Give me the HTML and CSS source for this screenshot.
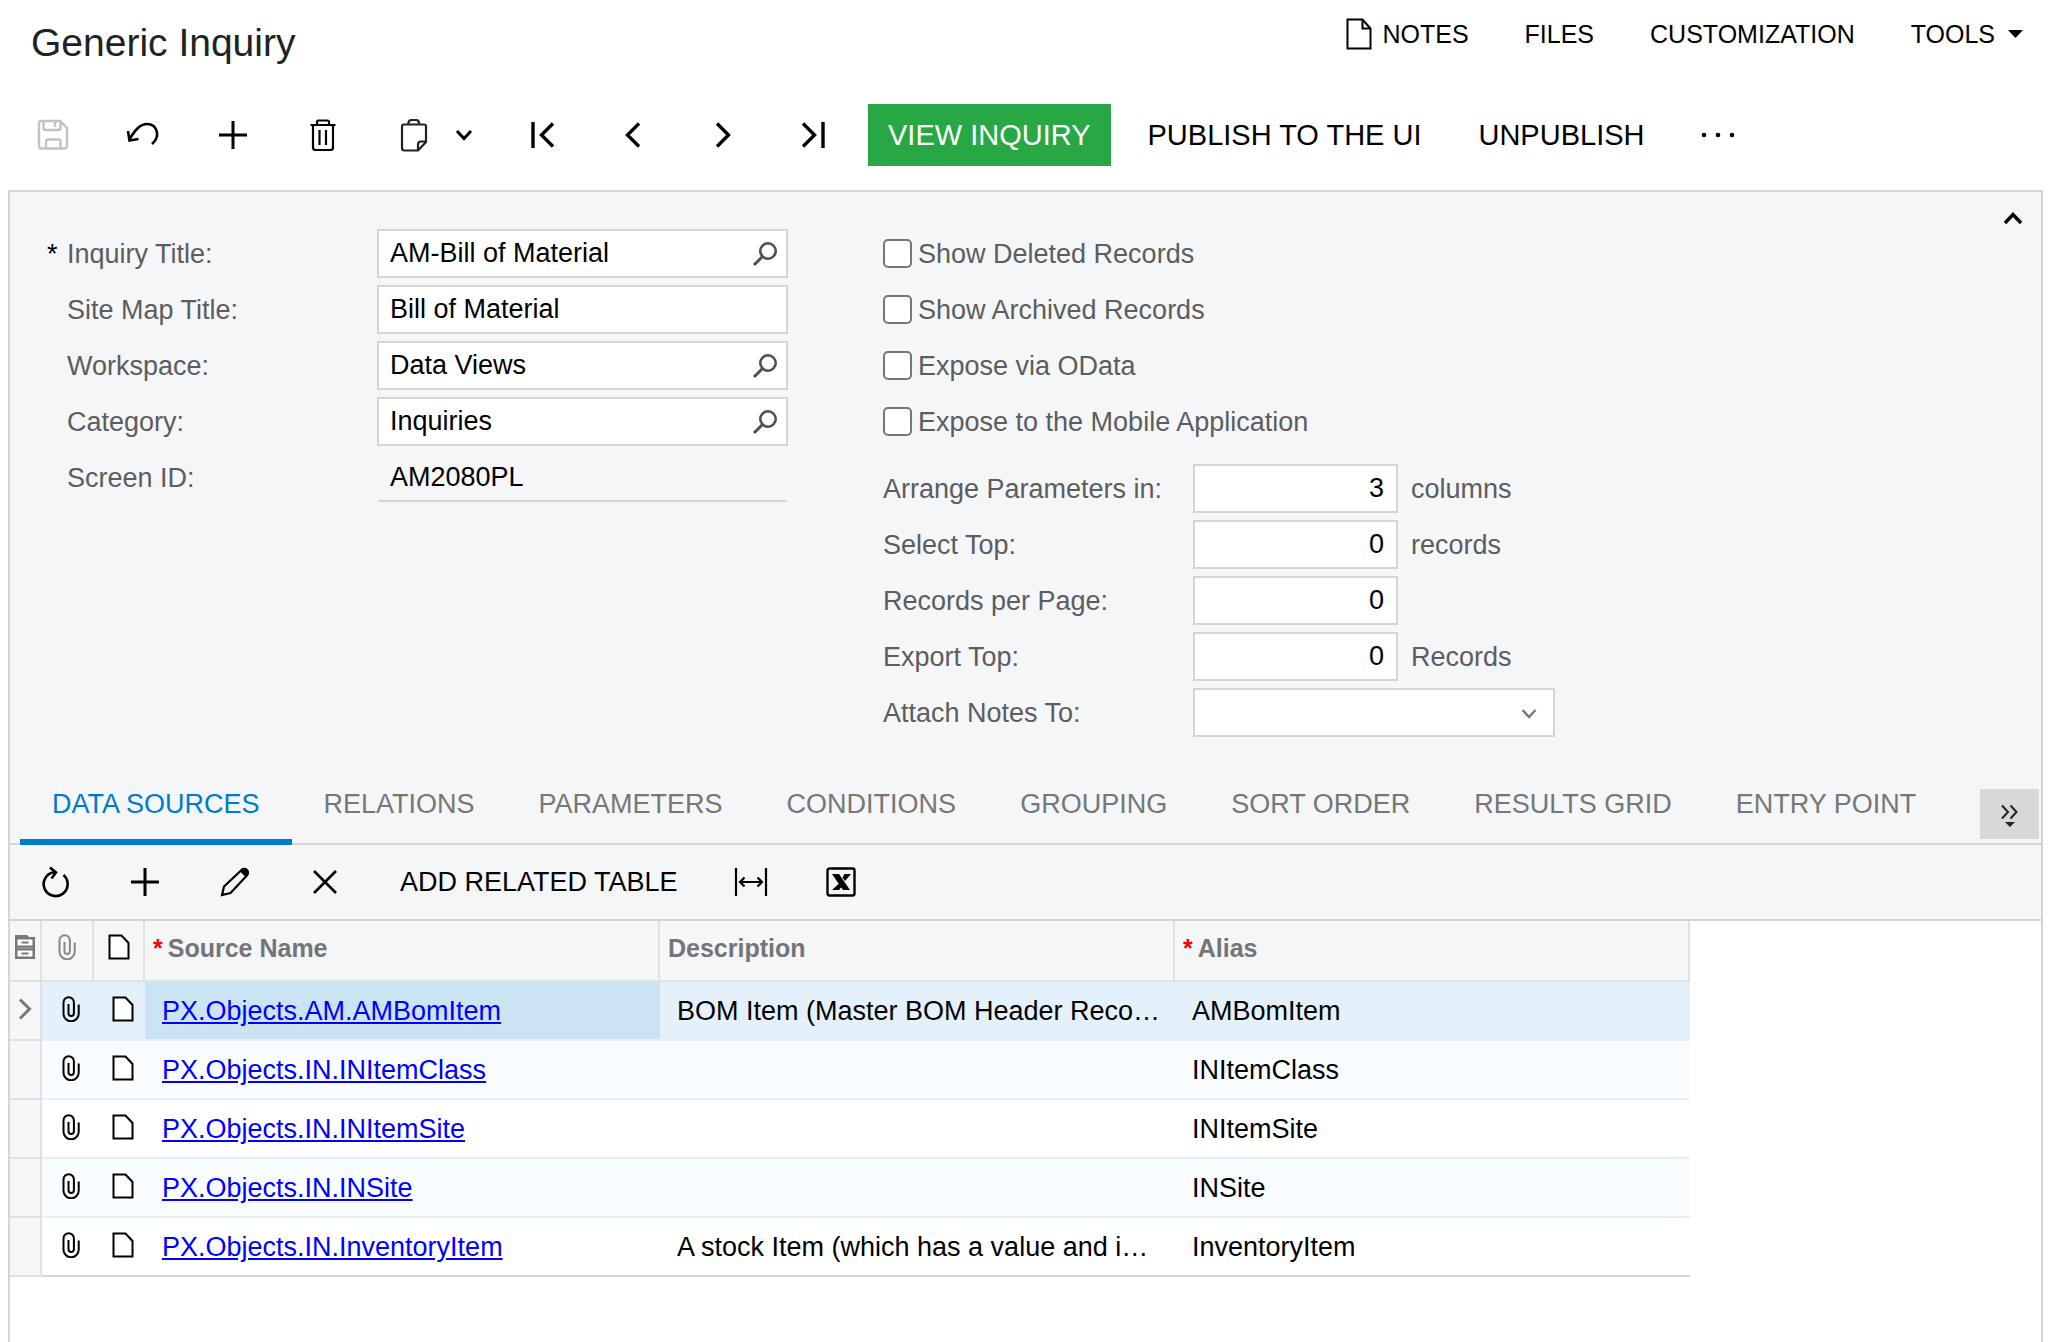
FILE: index.html
```html
<!DOCTYPE html>
<html lang="en">
<head>
<meta charset="UTF-8">
<meta name="viewport" content="width=device-width, initial-scale=1.0">
<title>Generic Inquiry</title>
<link rel="stylesheet" href="styles.css">
</head>
<body>
<svg class="symbols" width="0" height="0" aria-hidden="true">
<symbol id="i-plus" viewBox="0 0 32 32"><path d="M16 2v28M2 16h28" fill="none" stroke="currentColor" stroke-width="3"/></symbol>
<symbol id="i-search" viewBox="0 0 26 26"><circle cx="16" cy="10" r="7.7" fill="none" stroke="currentColor" stroke-width="2.6"/><path d="M10.5 15.5L2 24" fill="none" stroke="currentColor" stroke-width="3"/></symbol>
<symbol id="i-clip" viewBox="0 0 18 26"><path d="M16.7 8.5v9.2a7.6 7.600 0 0 1-15.200 0V6.500a5.200 5.200 0 0 1 10.400 0v10.700a2.700 2.700 0 0 1-5.400 0V8" fill="none" stroke="currentColor" stroke-width="2"/></symbol>
<symbol id="i-page" viewBox="0 0 22 26"><path d="M1.500 1.500h12l7 7.500v15.500h-19z" fill="#fff" stroke="currentColor" stroke-width="2"/></symbol>
</svg>

<header class="header">
<h1 class="title">Generic Inquiry</h1>
<nav class="menu">
<button class="menu-item"><svg class="menu-note" width="26" height="32" viewBox="0 0 26 32"><path d="M1.500 1.500h15l8 9v20h-23zM16.500 1.500v9h8" fill="none" stroke="#000" stroke-width="2"/></svg>NOTES</button>
<button class="menu-item">FILES</button>
<button class="menu-item">CUSTOMIZATION</button>
<button class="menu-item">TOOLS<svg class="menu-caret" width="16" height="8" viewBox="0 0 16 8"><path d="M0 0h15L7.500 8z"/></svg></button>
</nav>
</header>

<div class="toolbar">
<button class="icon-btn" aria-label="Save" disabled><svg width="32" height="32" viewBox="0 0 32 32"><path d="M4 2h19l7 7v18a2.500 2.500 0 0 1-2.500 2.500h-23A2.500 2.500 0 0 1 2 27V4a2 2 0 0 1 2-2zM6.500 2v7a2 2 0 0 0 2 2h13a2 2 0 0 0 2-2V2M18 3v5M9 29v-6.500a2 2 0 0 1 2-2h10.500a2 2 0 0 1 2 2V29" fill="none" stroke="currentColor" stroke-width="2.400"/></svg></button>
<button class="icon-btn" aria-label="Cancel"><svg width="34" height="32" viewBox="0 0 34 32"><path d="M3 21C9 11 14 5 21 5c10 0 14 12 5 20M2 12l1.500 9.500L12.500 20" fill="none" stroke="currentColor" stroke-width="2.600"/></svg></button>
<button class="icon-btn" aria-label="Add"><svg width="32" height="32"><use href="#i-plus"/></svg></button>
<button class="icon-btn" aria-label="Delete"><svg width="28" height="34" viewBox="0 0 28 34"><path d="M1.500 7h25M8 7V4a1.500 1.500 0 0 1 1.500-1.500h9A1.500 1.500 0 0 1 20 4v3M4 7v22.500A2.500 2.500 0 0 0 6.500 32h15a2.500 2.500 0 0 0 2.500-2.500V7M10.500 12v15M17 12v15" fill="none" stroke="currentColor" stroke-width="2.200"/></svg></button>
<div class="combo">
<button class="icon-btn combo-main" aria-label="Clipboard"><svg width="28" height="34" viewBox="0 0 28 34"><path d="M4 6.500h20a2 2 0 0 1 2 2V24l-8 8.500H4.500a2.500 2.500 0 0 1-2.500-2.500V8.500a2 2 0 0 1 2-2zM8.500 6V4.500a3 3 0 0 1 3-2.500h4.500a3 3 0 0 1 3 2.500V6M26 23.500h-5a3 3 0 0 0-3 3v6" fill="none" stroke="#222" stroke-width="2.200"/></svg></button>
<button class="icon-btn combo-arrow" aria-label="Clipboard menu"><svg width="18" height="12" viewBox="0 0 18 12"><path d="M2 2l7 7.500L16 2" fill="none" stroke="currentColor" stroke-width="3"/></svg></button>
</div>
<button class="icon-btn" aria-label="First"><svg width="24" height="28" viewBox="0 0 24 28"><path d="M2 1v26M22 2.500L10.500 14 22 25.500" fill="none" stroke="currentColor" stroke-width="3.400"/></svg></button>
<button class="icon-btn" aria-label="Previous"><svg width="16" height="28" viewBox="0 0 16 28"><path d="M14 2.500L2.500 14 14 25.500" fill="none" stroke="currentColor" stroke-width="3.400"/></svg></button>
<button class="icon-btn" aria-label="Next"><svg width="16" height="28" viewBox="0 0 16 28"><path d="M2 2.500L13.500 14 2 25.500" fill="none" stroke="currentColor" stroke-width="3.400"/></svg></button>
<button class="icon-btn" aria-label="Last"><svg width="24" height="28" viewBox="0 0 24 28"><path d="M22 1v26M2 2.500L13.500 14 2 25.500" fill="none" stroke="currentColor" stroke-width="3.400"/></svg></button>
<div class="actions">
<button class="action primary">VIEW INQUIRY</button>
<button class="action">PUBLISH TO THE UI</button>
<button class="action">UNPUBLISH</button>
<button class="action" aria-label="More"><svg width="34" height="6" viewBox="0 0 34 6"><circle cx="3" cy="3" r="2.300"/><circle cx="17" cy="3" r="2.300"/><circle cx="31" cy="3" r="2.300"/></svg></button>
</div>
</div>

<main class="panel">
<form class="form">
<div class="fields">
<div class="row"><label class="label required" for="inquiry-title">Inquiry Title:</label><div class="box"><input id="inquiry-title" type="text" value="AM-Bill of Material"><button type="button" class="lookup" aria-label="Select inquiry"><svg width="26" height="26"><use href="#i-search"/></svg></button></div></div>
<div class="row"><label class="label" for="sitemap-title">Site Map Title:</label><div class="box"><input id="sitemap-title" type="text" value="Bill of Material"></div></div>
<div class="row"><label class="label" for="workspace">Workspace:</label><div class="box"><input id="workspace" type="text" value="Data Views"><button type="button" class="lookup" aria-label="Select workspace"><svg width="26" height="26"><use href="#i-search"/></svg></button></div></div>
<div class="row"><label class="label" for="category">Category:</label><div class="box"><input id="category" type="text" value="Inquiries"><button type="button" class="lookup" aria-label="Select category"><svg width="26" height="26"><use href="#i-search"/></svg></button></div></div>
<div class="row"><label class="label" for="screen-id">Screen ID:</label><div class="box readonly"><input id="screen-id" type="text" value="AM2080PL" readonly></div></div>
</div>
<div class="options">
<div class="row"><input type="checkbox" class="check" id="show-deleted"><label for="show-deleted">Show Deleted Records</label></div>
<div class="row"><input type="checkbox" class="check" id="show-archived"><label for="show-archived">Show Archived Records</label></div>
<div class="row"><input type="checkbox" class="check" id="odata"><label for="odata">Expose via OData</label></div>
<div class="row"><input type="checkbox" class="check" id="mobile"><label for="mobile">Expose to the Mobile Application</label></div>
<div class="row params"><label class="label" for="columns">Arrange Parameters in:</label><div class="box num"><input id="columns" type="text" value="3"></div><span class="unit">columns</span></div>
<div class="row"><label class="label" for="select-top">Select Top:</label><div class="box num"><input id="select-top" type="text" value="0"></div><span class="unit">records</span></div>
<div class="row"><label class="label" for="per-page">Records per Page:</label><div class="box num"><input id="per-page" type="text" value="0"></div></div>
<div class="row"><label class="label" for="export-top">Export Top:</label><div class="box num"><input id="export-top" type="text" value="0"></div><span class="unit">Records</span></div>
<div class="row"><label class="label" for="attach">Attach Notes To:</label><div class="box drop"><select id="attach"><option></option></select><svg class="drop-arrow" width="16" height="12" viewBox="0 0 16 12"><path d="M1.500 2L8 9l6.500-7" fill="none" stroke="#777" stroke-width="2.400"/></svg></div></div>
</div>
<button type="button" class="collapse" aria-label="Collapse"><svg width="20" height="14" viewBox="0 0 20 14"><path d="M2 12l8-8.500L18 12" fill="none" stroke="#000" stroke-width="3.400"/></svg></button>
</form>

<div class="tabs">
<button class="tab active">DATA SOURCES</button>
<button class="tab">RELATIONS</button>
<button class="tab">PARAMETERS</button>
<button class="tab">CONDITIONS</button>
<button class="tab">GROUPING</button>
<button class="tab">SORT ORDER</button>
<button class="tab">RESULTS GRID</button>
<button class="tab">ENTRY POINT</button>
<button class="tabs-more" aria-label="More tabs"><svg width="20" height="24" viewBox="0 0 20 24"><path d="M2 1.500l6 6.500-6 6.500M10.500 1.500l6 6.500-6 6.500" fill="none" stroke="#222" stroke-width="2"/><path d="M5 18h10l-5 5z" fill="#222"/></svg></button>
</div>

<div class="grid-bar">
<button class="icon-btn" aria-label="Refresh"><svg width="30" height="32" viewBox="0 0 30 32"><path d="M23.500 9A12 12 0 1 1 14 6.200M10 1.500l6 5-4.500 6" fill="none" stroke="currentColor" stroke-width="2.600"/></svg></button>
<button class="icon-btn" aria-label="Add row"><svg width="32" height="32"><use href="#i-plus"/></svg></button>
<button class="icon-btn" aria-label="Edit"><svg width="30" height="30" viewBox="0 0 30 30"><path d="M2 28l2-8.500L21.500 3a3.800 3.800 0 0 1 5.400 5.400L10.500 26z" fill="none" stroke="currentColor" stroke-width="2.200"/><path d="M20 4.500L22.500 2c3-1.500 7 2 5.500 5.500L25.500 10z" fill="currentColor"/></svg></button>
<button class="icon-btn" aria-label="Delete row"><svg width="26" height="26" viewBox="0 0 26 26"><path d="M2 2l22 22M24 2L2 24" fill="none" stroke="currentColor" stroke-width="2.600"/></svg></button>
<button class="text-btn">ADD RELATED TABLE</button>
<button class="icon-btn" aria-label="Fit columns"><svg width="34" height="30" viewBox="0 0 34 30"><path d="M2 1v28M32 1v28M6 15h22M10.500 10.500L6 15l4.500 4.500M23.500 10.500L28 15l-4.500 4.500" fill="none" stroke="currentColor" stroke-width="2.200"/></svg></button>
<button class="icon-btn" aria-label="Export to Excel"><svg width="30" height="30" viewBox="0 0 30 30"><rect x="1.500" y="1.500" width="27" height="27" rx="2" fill="none" stroke="currentColor" stroke-width="2.400"/><path d="M6 7h7l11 16h-7zM18.500 7H25l-6 7-2.500-3.500zM13 16.500l2.500 3.500-2.500 3H6z" fill="currentColor"/></svg></button>
</div>

<div class="grid-wrap">
<table class="grid">
<colgroup><col class="c-mark"><col class="c-clip"><col class="c-page"><col class="c-data"><col class="c-data"><col class="c-data"></colgroup>
<thead>
<tr>
<th class="icon"><svg width="22" height="26" viewBox="0 0 22 26"><path d="M1 1h12l2 2h6v22H1z" fill="#777"/><path d="M3.500 5.500h15v6h-15zM3.500 16.500h15v6h-15z" fill="#fff"/><path d="M3 14h16" stroke="#aaa" stroke-width="1"/><path d="M7.500 8.500h7M7.500 19.500h7" stroke="#777" stroke-width="2"/></svg></th>
<th class="icon"><svg class="muted" width="18" height="26"><use href="#i-clip"/></svg></th>
<th class="icon"><svg width="22" height="26"><use href="#i-page"/></svg></th>
<th><span class="star">*</span>Source Name</th>
<th>Description</th>
<th><span class="star">*</span>Alias</th>
</tr>
</thead>
<tbody>
<tr class="current">
<td class="mark"><svg width="14" height="22" viewBox="0 0 14 22"><path d="M2 1.500L11.500 11 2 20.500" fill="none" stroke="#777" stroke-width="3"/></svg></td>
<td class="icon"><svg width="18" height="26"><use href="#i-clip"/></svg></td>
<td class="icon"><svg width="22" height="26"><use href="#i-page"/></svg></td>
<td class="selected"><a href="#">PX.Objects.AM.AMBomItem</a></td>
<td>BOM Item (Master BOM Header Reco…</td>
<td>AMBomItem</td>
</tr>
<tr>
<td class="mark"></td>
<td class="icon"><svg width="18" height="26"><use href="#i-clip"/></svg></td>
<td class="icon"><svg width="22" height="26"><use href="#i-page"/></svg></td>
<td><a href="#">PX.Objects.IN.INItemClass</a></td>
<td></td>
<td>INItemClass</td>
</tr>
<tr>
<td class="mark"></td>
<td class="icon"><svg width="18" height="26"><use href="#i-clip"/></svg></td>
<td class="icon"><svg width="22" height="26"><use href="#i-page"/></svg></td>
<td><a href="#">PX.Objects.IN.INItemSite</a></td>
<td></td>
<td>INItemSite</td>
</tr>
<tr>
<td class="mark"></td>
<td class="icon"><svg width="18" height="26"><use href="#i-clip"/></svg></td>
<td class="icon"><svg width="22" height="26"><use href="#i-page"/></svg></td>
<td><a href="#">PX.Objects.IN.INSite</a></td>
<td></td>
<td>INSite</td>
</tr>
<tr>
<td class="mark"></td>
<td class="icon"><svg width="18" height="26"><use href="#i-clip"/></svg></td>
<td class="icon"><svg width="22" height="26"><use href="#i-page"/></svg></td>
<td><a href="#">PX.Objects.IN.InventoryItem</a></td>
<td>A stock Item (which has a value and i…</td>
<td>InventoryItem</td>
</tr>
</tbody>
</table>
</div>
</main>
</body>
</html>
```
FILE: styles.css
```css
* {
box-sizing: border-box;
}
body {
margin: 0;
min-height: 100vh;
display: flex;
flex-direction: column;
background-color: #fff;
color: #000;
font-family: "Liberation Sans", Arial, sans-serif;
font-size: 27px;
line-height: 30px;
}
button, input, select {
font: inherit;
color: inherit;
margin: 0;
padding: 0;
border: none;
background: none;
}
button {
cursor: pointer;
white-space: nowrap;
}
svg {
display: block;
flex: none;
}
.symbols {
position: absolute;
}

/* header */
.header {
display: flex;
justify-content: space-between;
align-items: flex-start;
height: 104px;
padding: 20px 24px 0 31px;
}
.title {
margin: 0;
font-size: 39px;
line-height: 46px;
font-weight: normal;
color: #222;
}
.menu {
display: flex;
gap: 56px;
}
.menu-item {
display: flex;
align-items: center;
height: 28px;
font-size: 25px;
line-height: 28px;
}
.menu-note {
margin-right: 10px;
}
.menu-caret {
margin-left: 13px;
}

/* toolbar */
.toolbar {
display: flex;
align-items: center;
height: 62px;
margin-bottom: 24px;
padding-left: 8px;
}
.icon-btn {
display: flex;
align-items: center;
justify-content: center;
width: 90px;
height: 60px;
}
.icon-btn:disabled {
color: #c2c2c2;
}
.combo {
display: flex;
margin: 0 14px 0 16px;
}
.combo-main {
width: 60px;
}
.combo-arrow {
width: 40px;
}
.actions {
display: flex;
gap: 17px;
margin-left: 10px;
}
.action {
display: flex;
align-items: center;
height: 62px;
padding: 0 20px;
font-size: 29px;
}
.primary {
background-color: #28a745;
color: #fff;
}

/* panel */
.panel {
flex: 1;
display: flex;
flex-direction: column;
margin: 0 5px 0 8px;
border: 2px solid #d3d5da;
border-bottom: none;
background-color: #f5f6f8;
}
.form {
display: flex;
align-items: flex-start;
padding: 37px 0 34px 37px;
color: #5b5d60;
}
.fields {
margin-right: 95px;
}
.fields, .options {
display: flex;
flex-direction: column;
gap: 7px;
}
.row {
display: flex;
align-items: center;
height: 49px;
}
.label {
width: 310px;
}
.fields .label {
width: 330px;
padding-left: 20px;
}
.fields .required {
padding-left: 0;
}
.required::before {
content: "*";
display: inline-block;
width: 20px;
color: #000;
}
.box {
display: flex;
align-items: center;
width: 411px;
height: 49px;
border: 2px solid #d3d6d9;
background-color: #fff;
color: #000;
}
.box input {
flex: 1;
min-width: 0;
height: 45px;
padding: 0 12px 0 11px;
outline: none;
}
.readonly {
border-color: transparent transparent #d3d6d9;
background: none;
}
.lookup {
margin-right: 8px;
color: #505050;
}
.num {
width: 205px;
}
.num input {
text-align: right;
}
.unit {
margin-left: 13px;
}
.params {
margin-top: 11px;
}
.check {
appearance: none;
width: 29px;
height: 29px;
margin-right: 6px;
border: 2px solid #767676;
border-radius: 5px;
background-color: #fff;
}
.drop {
position: relative;
width: 362px;
}
.drop select {
appearance: none;
width: 100%;
height: 45px;
padding: 0 40px 0 12px;
}
.drop-arrow {
position: absolute;
right: 16px;
top: 18px;
pointer-events: none;
}
.collapse {
margin: -18px 18px 0 auto;
}

/* tabs */
.tabs {
display: flex;
padding: 0 2px 0 10px;
border-bottom: 2px solid #d3d5d8;
}
.tab {
margin-bottom: -2px;
padding: 18px 32px 20px;
border-bottom: 6px solid transparent;
color: #777;
}
.tab.active {
border-bottom-color: #007acc;
color: #007acc;
}
.tabs-more {
display: flex;
align-items: center;
justify-content: center;
width: 59px;
height: 50px;
margin: 18px 0 0 auto;
padding-top: 3px;
background-color: #d6d8da;
}

/* grid */
.grid-bar {
display: flex;
align-items: center;
height: 76px;
border-bottom: 2px solid #d3d5d8;
}
.text-btn {
padding: 0 28px 0 30px;
}
.grid-wrap {
flex: 1;
background-color: #fff;
}
.grid {
width: 1680px;
table-layout: fixed;
border-collapse: separate;
border-spacing: 0;
}
.c-mark {
width: 32px;
}
.c-clip {
width: 52px;
}
.c-page {
width: 51px;
}
.grid th {
height: 61px;
padding: 0 8px 6px;
border-right: 2px solid #dfe1e6;
border-bottom: 2px solid #dfe1e6;
background-color: #f5f6f8;
color: #737578;
font-size: 25px;
text-align: left;
}
.grid td {
height: 59px;
padding: 0 4px 0 17px;
border-bottom: 2px solid #e5f1f8;
white-space: nowrap;
overflow: hidden;
text-overflow: ellipsis;
}
.grid tr:nth-child(even) td {
background-color: #f9fdff;
}
.grid tr.current td {
background-color: #e4f1fa;
}
.grid tr.current td.selected {
background-color: #cbe4f4;
}
.grid tr:last-child td {
border-bottom-color: #d5d6d9;
}
.grid tr td.mark {
padding: 0 0 4px 8px;
border-right: 2px solid #dfe1e6;
border-bottom-color: #dfe1e6;
background-color: #f5f6f8;
}
.grid th.icon {
padding: 0 0 8px;
color: #000;
}
.grid td.icon {
padding: 0 0 4px 6px;
}
.icon svg {
margin: 0 auto;
}
.grid .muted {
color: #888;
}
.grid a {
color: #00f;
}
.star {
margin-right: 5px;
color: #f00;
}
```
